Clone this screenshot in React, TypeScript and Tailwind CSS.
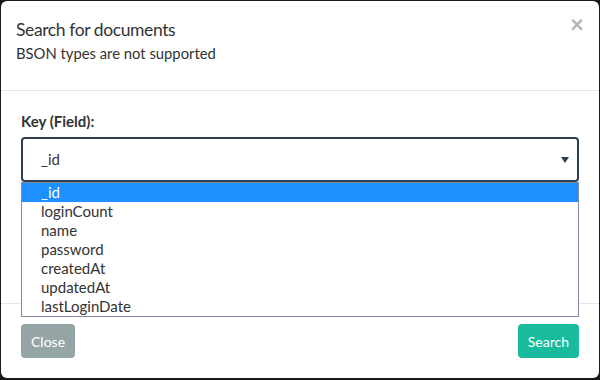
import React from "react";

const FIELDS = ["_id", "loginCount", "name", "password", "createdAt", "updatedAt", "lastLoginDate"];

function Caret() {
  return (
    <svg width="8" height="6" viewBox="0 0 8 6" className="shrink-0">
      <path d="M0 0 L8 0 L4 6 Z" fill="#2c3e50" />
    </svg>
  );
}

export default function App() {
  return (
    <div className="w-[600px] h-[380px] bg-[#1a1a1a] pt-px pl-px overflow-hidden" style={{ fontFamily: "Lato, 'Open Sans', sans-serif" }}>
      <div className="w-[598px] h-[377px] bg-white rounded-[6px] text-[#333] flex flex-col">
        {/* Header */}
        <div className="relative px-[15px] pt-[15px] pb-[15px] border-b border-[#e5e5e5] h-[90px]">
          <button className="absolute right-[15px] top-[11px] text-[24px] leading-none font-bold text-[#b3b3b3]">×</button>
          <h4 className="text-[17.5px] leading-[27px] tracking-[-0.4px] text-[#333]">Search for documents</h4>
          <p className="text-[14.8px] leading-[21px] text-[#333]">BSON types are not supported</p>
        </div>

        {/* Body */}
        <div className="relative p-[20px]">
          <div className="mb-[15px]">
            <label className="block text-[15px] leading-[21px] font-bold mb-[5px]">Key (Field):</label>
            <div className="relative">
              <div className="h-[45px] border-2 border-[#2c3e50] rounded-[4px] flex items-center justify-between pl-[18px] pr-[8px] text-[15px]">
                <span>_id</span>
                <Caret />
              </div>
              {/* Open dropdown list */}
              <ul className="absolute left-0 right-0 top-[45px] z-10 bg-white border border-[#7f8b9c] text-[15px]">
                {FIELDS.map((f, i) => (
                  <li
                    key={f}
                    className={`h-[19px] leading-[19px] pl-[19px] ${i === 0 ? "bg-[#1e90ff] text-white" : "text-[#333]"}`}
                  >
                    {f}
                  </li>
                ))}
              </ul>
            </div>
          </div>
          <div className="h-[86px]" />
        </div>

        {/* Footer */}
        <div className="border-t border-[#e5e5e5] px-[20px] pt-[20px] flex justify-between">
          <button className="h-[34px] px-[10px] rounded-[4px] bg-[#95a5a6] text-white text-[14px]">Close</button>
          <button className="h-[34px] px-[10px] rounded-[4px] bg-[#18bc9c] text-white text-[14px]">Search</button>
        </div>
      </div>
    </div>
  );
}
